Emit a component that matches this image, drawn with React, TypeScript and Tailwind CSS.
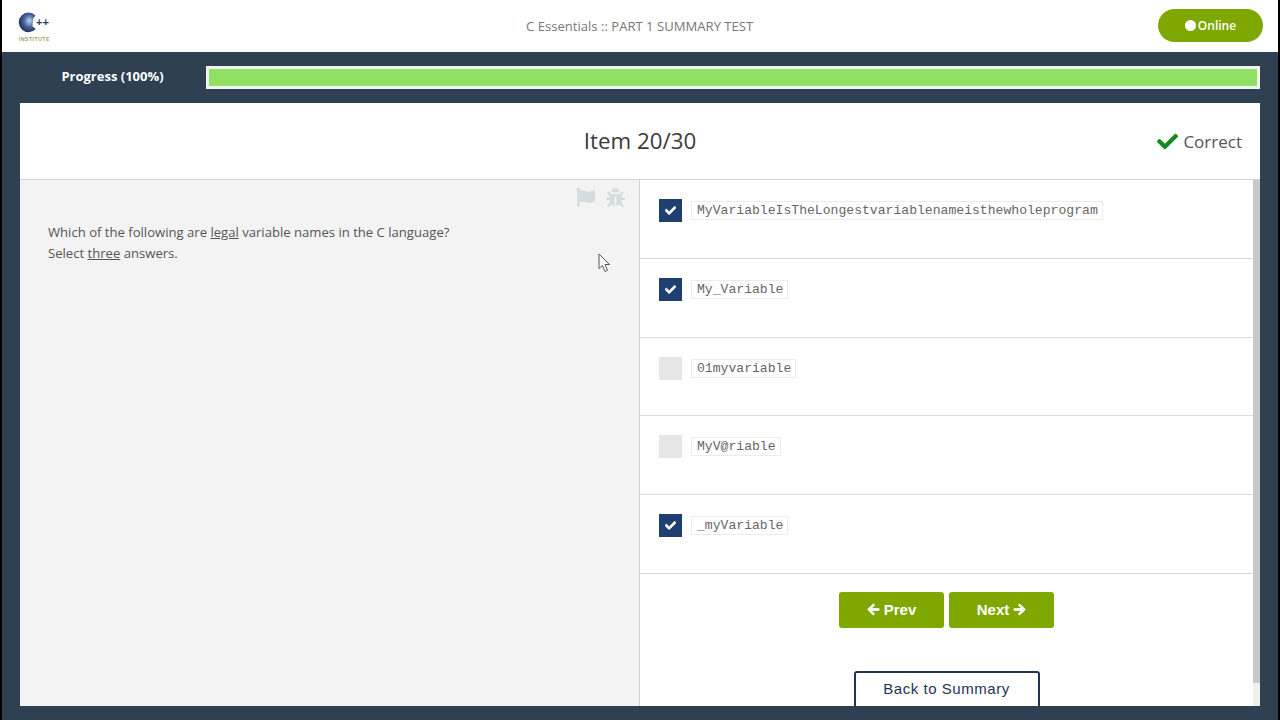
import React from 'react';
import { FaArrowLeft, FaArrowRight, FaBug, FaCheck, FaFlag } from 'react-icons/fa';

const answers = [
  { code: 'MyVariableIsTheLongestvariablenameisthewholeprogram', checked: true },
  { code: 'My_Variable', checked: true },
  { code: '01myvariable', checked: false },
  { code: 'MyV@riable', checked: false },
  { code: '_myVariable', checked: true },
];

const Logo = () => (
  <div className="flex flex-col items-start ml-[16px] mt-[1px] w-[34px]">
    <div className="flex items-center">
      <svg width="21" height="21" viewBox="0 0 21 21">
        <defs>
          <radialGradient id="globe" cx="0.62" cy="0.42" r="0.7">
            <stop offset="0" stopColor="#c4d4f0" />
            <stop offset="0.45" stopColor="#48659f" />
            <stop offset="1" stopColor="#14213f" />
          </radialGradient>
        </defs>
        <path d="M17.5 3.4A9.8 9.8 0 1 0 17.8 17L14.5 14.2L15 7Z" fill="url(#globe)" />
      </svg>
      <span className="text-[11px] leading-none font-bold text-[#2e4052] -ml-[3px] font-['Liberation_Sans',sans-serif]">++</span>
    </div>
    <span className="text-[5px] leading-none mt-[4px] ml-[1px] tracking-[0.55px] font-bold text-[#a39a5c] font-['Liberation_Sans',sans-serif]">INSTITUTE</span>
  </div>
);

const AnswerRow = ({ code, checked }: { code: string; checked: boolean }) => (
  <div className="h-[78.8px] border-b border-[#dcdcdc] flex items-start pl-[19px] pt-[19px] gap-[9px]">
    {checked ? (
      <div className="w-[23px] h-[23px] bg-[#1f3f71] flex items-center justify-center">
        <FaCheck className="text-white w-[11px] h-[11px]" stroke="currentColor" strokeWidth={30} />
      </div>
    ) : (
      <div className="w-[23px] h-[23px] bg-[#e6e6e6]" />
    )}
    <code className="border border-[#ececec] bg-white pl-[5px] pr-[4px] h-[19px] mt-[2px] leading-[17px] text-[13.1px] text-[#666] font-['Liberation_Mono',monospace]">
      {code}
    </code>
  </div>
);

export default function App() {
  return (
    <div className="h-[720px] w-[1280px] overflow-hidden bg-black px-[2px] font-['Open_Sans',sans-serif]">
      <div className="h-full flex flex-col bg-[#2e4052]">
        <header className="h-[52px] bg-white flex items-center justify-between relative shrink-0">
          <Logo />
          <span className="text-[13.1px] text-[#777] absolute left-[524px] top-[17px] leading-[18px]">C Essentials :: PART 1 SUMMARY TEST</span>
          <div className="mr-[15px] mb-[1px] w-[105px] h-[33px] rounded-full bg-[#7ea700] text-white flex items-center justify-center gap-[2px] text-[12px] font-semibold">
            <span className="w-[11px] h-[11px] rounded-full bg-white" />
            Online
          </div>
        </header>

        <div className="h-[51px] flex items-center shrink-0">
          <div className="w-[204px] pl-[17px] pb-[2px] text-center text-white text-[13px] font-bold">Progress (100%)</div>
          <div className="w-[1054px] h-[23px] border-[3px] border-[#f2f5ee] bg-[#8fe063]" />
        </div>

        <main className="mx-[18px] flex-1 min-h-0 bg-white flex flex-col">
          <div className="h-[77px] shrink-0 border-b border-[#d2d2d2] relative flex items-center justify-center">
            <span className="text-[22.3px] text-[#3a3a3a]">Item 20/30</span>
            <div className="absolute right-[18px] top-[27px] flex items-center gap-[5px] text-[#555] text-[17px] leading-[23px]">
              <FaCheck className="text-[#158a1c] w-[21px] h-[21px]" />
              Correct
            </div>
          </div>

          <div className="flex-1 min-h-0 flex">
            <section className="w-[620px] shrink-0 bg-[#f3f3f3] border-r border-[#d2d2d2] relative px-[28px] pt-[42px] text-[13.1px] leading-[21px] text-[#555]">
              <div className="absolute right-[14px] top-[8px] flex items-center gap-[10px] text-[#d5dce0]">
                <FaFlag className="w-[21px] h-[19px]" />
                <FaBug className="w-[19px] h-[19px]" />
              </div>
              <p>
                Which of the following are <u>legal</u> variable names in the C language?
                <br />
                Select <u>three</u> answers.
              </p>
              <svg className="absolute left-[578px] top-[73px]" width="13" height="20" viewBox="0 0 13 20">
                <path d="M1 1V15.5L4.5 12.5L7 18.5L9.5 17.3L7 11.5H11.5Z" fill="#fff" stroke="#555" strokeWidth="1" strokeLinejoin="round" />
              </svg>
            </section>

            <section className="flex-1 min-w-0 flex">
              <div className="flex-1 min-w-0 overflow-hidden">
                {answers.map((a) => (
                  <AnswerRow key={a.code} code={a.code} checked={a.checked} />
                ))}
                <div className="flex justify-center gap-[5px] mt-[18px]">
                  <button className="w-[105px] h-[36px] rounded-[3px] bg-[#7ea700] text-white text-[15px] font-bold font-['Liberation_Sans',sans-serif] flex items-center justify-center gap-[4px]">
                    <FaArrowLeft className="w-[13px] h-[13px]" stroke="currentColor" strokeWidth={30} />
                    Prev
                  </button>
                  <button className="w-[105px] h-[36px] rounded-[3px] bg-[#7ea700] text-white text-[15px] font-bold font-['Liberation_Sans',sans-serif] flex items-center justify-center gap-[4px]">
                    Next
                    <FaArrowRight className="w-[13px] h-[13px]" stroke="currentColor" strokeWidth={30} />
                  </button>
                </div>
                <div className="flex justify-center mt-[43px]">
                  <button className="w-[186px] h-[40px] shrink-0 rounded-[3px] border-2 border-[#1f3354] bg-white text-[#1f3354] text-[15px] tracking-[0.55px] font-['Liberation_Sans',sans-serif] pb-[4px]">
                    Back to Summary
                  </button>
                </div>
              </div>
              <div className="w-[7px] shrink-0 bg-[#c8c8c8] flex flex-col justify-end">
                <div className="h-[23px] bg-[#f0f0ea]" />
              </div>
            </section>
          </div>
        </main>
        <div className="h-[14px] shrink-0" />
      </div>
    </div>
  );
}
